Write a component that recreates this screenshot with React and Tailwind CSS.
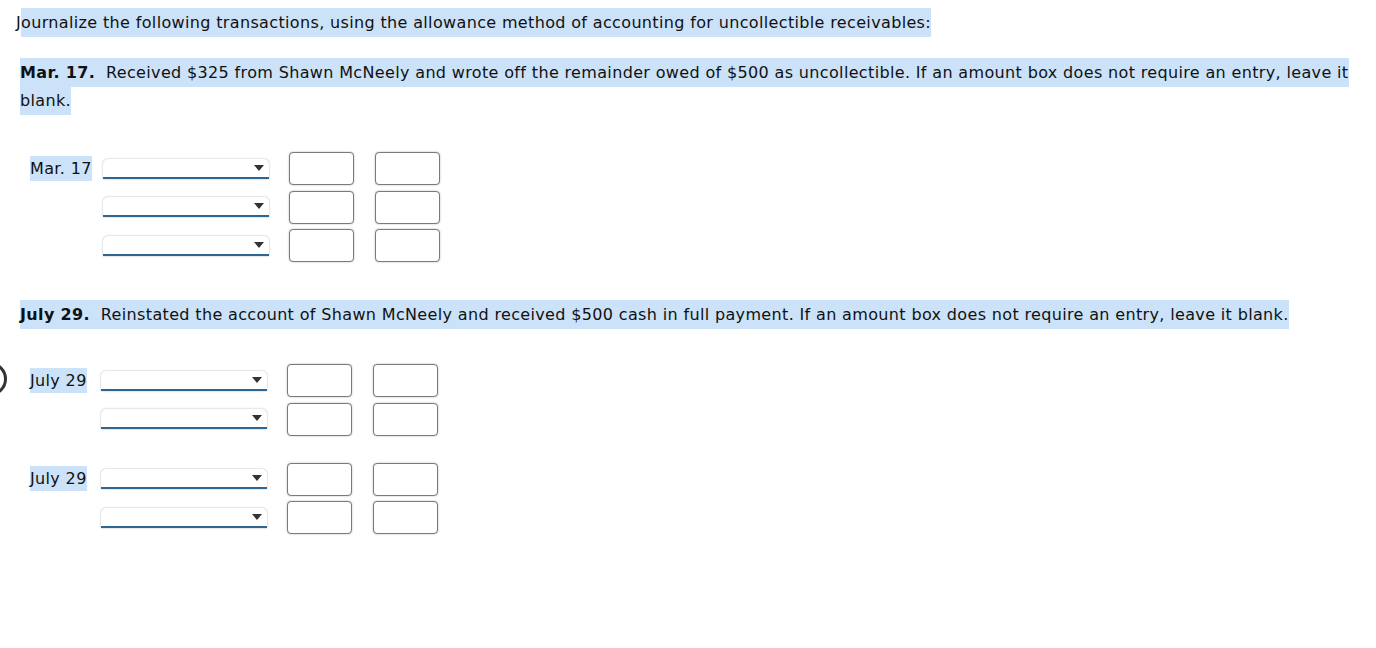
import React from "react";

const HL = "bg-[#cbe2f8]";

function Select() {
  return (
    <div className="relative w-[166px] h-[20px] bg-white rounded-t-[5px] border-b-2 border-[#2d6593] shadow-[0_0_2px_rgba(0,0,0,0.35)]">
      <div className="absolute right-[5px] top-[6px] w-0 h-0 border-l-[5px] border-r-[5px] border-t-[6px] border-l-transparent border-r-transparent border-t-[#333]" />
    </div>
  );
}

function Box() {
  return (
    <div className="w-[65px] h-[33px] bg-white border border-[#7a7a7a] rounded-[4px] shadow-[0_0_2px_rgba(0,0,0,0.3)]" />
  );
}

function Block({ label, rows, labelW, className = "" }) {
  return (
    <div className={"flex flex-col gap-y-[5.5px] pl-[30px] " + className}>
      {Array.from({ length: rows }).map((_, i) => (
        <div key={i} className="flex items-center h-[33px]">
          <div className={labelW}>
            {i === 0 ? (
              <span className={HL + " py-[3px] leading-[19px]"}>{label}</span>
            ) : null}
          </div>
          <Select />
          <div className="ml-[20px]">
            <Box />
          </div>
          <div className="ml-[21px]">
            <Box />
          </div>
        </div>
      ))}
    </div>
  );
}

export default function App() {
  return (
    <div
      className="relative w-[1376px] h-[648px] bg-white text-[16px] text-[#111] tracking-[0.35px]"
      style={{ fontFamily: '"DejaVu Sans", Verdana, sans-serif' }}
    >
      <div className="pl-[16px] pt-[8px] leading-[29px]">
        J<span className={HL + " py-[5px]"}>ournalize the following transactions, using the allowance method of accounting for uncollectible receivables:</span>
      </div>

      <div className="pl-[20px] pr-[24px] mt-[22px] leading-[28px]">
        <span className={HL + " py-[5px] box-decoration-clone"}>
          <b>Mar. 17.</b>{"\u00a0 "}Received $325 from Shawn McNeely and wrote off the remainder owed of $500 as uncollectible. If an amount box does not require an entry, leave it blank.
        </span>
      </div>

      <Block label="Mar. 17" rows={3} labelW="w-[73px]" className="mt-[37px]" />

      <div className="pl-[20px] mt-[38px] leading-[29px]">
        <span className={HL + " py-[5px]"}>
          <b>July 29.</b>{"\u00a0 "}Reinstated the account of Shawn McNeely and received $500 cash in full payment. If an amount box does not require an entry, leave it blank.
        </span>
      </div>

      <div className="relative pt-[35px]">
        <div className="absolute left-[-27px] top-[33px] w-[34px] h-[34px] rounded-full border-[3px] border-[#333]" />
        <Block label="July 29" rows={2} labelW="w-[71px]" />
      </div>

      <Block label="July 29" rows={2} labelW="w-[71px]" className="mt-[27px]" />
    </div>
  );
}
